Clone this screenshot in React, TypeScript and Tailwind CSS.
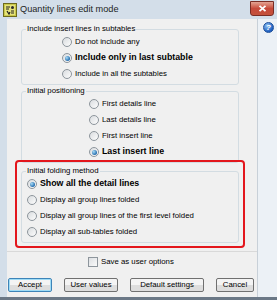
import React from "react";

function Radio({ checked }: { checked?: boolean }) {
  return (
    <span className="flex h-[10px] w-[10px] shrink-0 items-center justify-center rounded-full border border-[#8d959c] bg-gradient-to-br from-[#d9dcdf] to-[#fdfdfd]">
      {checked && (
        <span className="h-[5px] w-[5px] rounded-full bg-[radial-gradient(circle_at_35%_35%,#a8dcf8,#1a64a8_75%)]" />
      )}
    </span>
  );
}

function Option({ label, checked, bold }: { label: string; checked?: boolean; bold?: boolean }) {
  return (
    <div className="flex h-[16px] items-center gap-[3px]">
      <Radio checked={checked} />
      <span className={bold ? "text-[8.8px] font-bold" : ""}>{label}</span>
    </div>
  );
}

function Group({ title, pad, children }: { title: string; pad: string; children: React.ReactNode }) {
  return (
    <fieldset className="rounded-[3px] border border-[#d3dce2] pb-[2px]">
      <legend className="ml-[4px] px-[1px] leading-[10px]">{title}</legend>
      <div className={pad}>{children}</div>
    </fieldset>
  );
}

function Button({ label, w, primary }: { label: string; w: string; primary?: boolean }) {
  return (
    <div
      className={`flex h-[14px] items-center justify-center rounded-[2px] border bg-gradient-to-b from-[#f4f4f4] from-50% to-[#dddddd] to-50% ${w} ${
        primary ? "border-[#3d84b8] shadow-[inset_0_0_0_1px_#9fdcf6]" : "border-[#707070]"
      }`}
    >
      {label}
    </div>
  );
}

export default function App() {
  return (
    <div className="flex h-[300px] w-[277px] flex-col overflow-hidden bg-[#d3dee9] text-[7.8px] text-black font-['Liberation_Sans',Arial,sans-serif]">
      {/* title bar */}
      <div className="flex h-[19px] shrink-0 items-center pl-[3px] pr-[3px]">
        <svg width="14" height="14" viewBox="0 0 14 14" className="shrink-0">
          <rect x="0.5" y="0.5" width="13" height="13" fill="#c9c84a" stroke="#6d6a1c" />
          <rect x="2" y="2" width="10" height="10" fill="#e6e37a" />
          <path d="M3 4h4M3 6h3M8 8h3M8 10h3" stroke="#222" strokeWidth="1" />
          <path d="M4 8l2 3 1-2" stroke="#1b1b1b" strokeWidth="1.2" fill="none" />
          <circle cx="9.5" cy="4.5" r="1.5" fill="#2a2a2a" />
        </svg>
        <span className="ml-[3px] text-[9.2px] text-[#1e1e1e]">Quantity lines edit mode</span>
        <div className="ml-auto mt-[-3px] flex h-[15px] w-[24px] items-center justify-center rounded-b-[3px] border border-[#7a2d25] bg-gradient-to-b from-[#e3a393] via-[#c7493a] to-[#c3523c]">
          <svg width="9" height="7" viewBox="0 0 9 7">
            <path d="M1.5 0.8 L7.5 6.2 M7.5 0.8 L1.5 6.2" stroke="#fff" strokeWidth="1.8" />
          </svg>
        </div>
      </div>

      <div className="flex flex-1">
        <div className="w-[7px] shrink-0" />
        {/* client */}
        <div className="flex w-[250px] shrink-0 flex-col bg-[#f0f0f0] pt-[5px]">
          <div className="pl-[14px] pr-[18px]">
            <Group title="Include insert lines in subtables" pad="pl-[40px]">
              <Option label="Do not include any" />
              <Option label="Include only in last subtable" checked bold />
              <Option label="Include in all the subtables" />
            </Group>
            <div className="mt-[1px]">
              <Group title="Initial positioning" pad="pl-[67px]">
                <Option label="First details line" />
                <Option label="Last details line" />
                <Option label="First insert line" />
                <Option label="Last insert line" checked bold />
              </Group>
            </div>
          </div>
          <div className="ml-[8px] mr-[12px] mt-[-3px] rounded-[4px] border-2 border-[#e3161c] px-[4px] pb-[3px] pt-[4px]">
            <Group title="Initial folding method" pad="pl-[5px]">
              <Option label="Show all the detail lines" checked bold />
              <Option label="Display all group lines folded" />
              <Option label="Display all group lines of the first level folded" />
              <Option label="Display all sub-tables folded" />
            </Group>
          </div>
          <div className="mt-[3px] border-t border-[#d9d9d9] shadow-[inset_0_1px_0_#ffffff]" />
          <div className="mt-[4px] flex h-[12px] items-center pl-[81px]">
            <span className="h-[10px] w-[10px] border border-[#8d959c] bg-gradient-to-br from-[#dcdfe2] to-[#fafafa]" />
            <span className="ml-[3px]">Save as user options</span>
          </div>
          <div className="mt-[10px] flex gap-[12px] pl-[1px]">
            <Button label="Accept" w="w-[44px]" primary />
            <Button label="User values" w="w-[54px]" />
            <Button label="Default settings" w="w-[74px]" />
            <Button label="Cancel" w="w-[38px]" />
          </div>
        </div>
        {/* right strip */}
        <div className="flex flex-1 flex-col items-center border-l border-[#c8d0d8] bg-[#ecf1f6] pt-[3px]">
          <span className="ml-[2px] flex h-[11px] w-[11px] items-center justify-center rounded-full border border-[#1c4f9a] bg-[radial-gradient(circle_at_35%_30%,#8fc2f5,#1f5fc0_70%)] text-[8px] font-bold italic leading-none text-white">
            ?
          </span>
        </div>
      </div>
      <div className="h-[3px] shrink-0 bg-[#6b7886]" />
    </div>
  );
}
